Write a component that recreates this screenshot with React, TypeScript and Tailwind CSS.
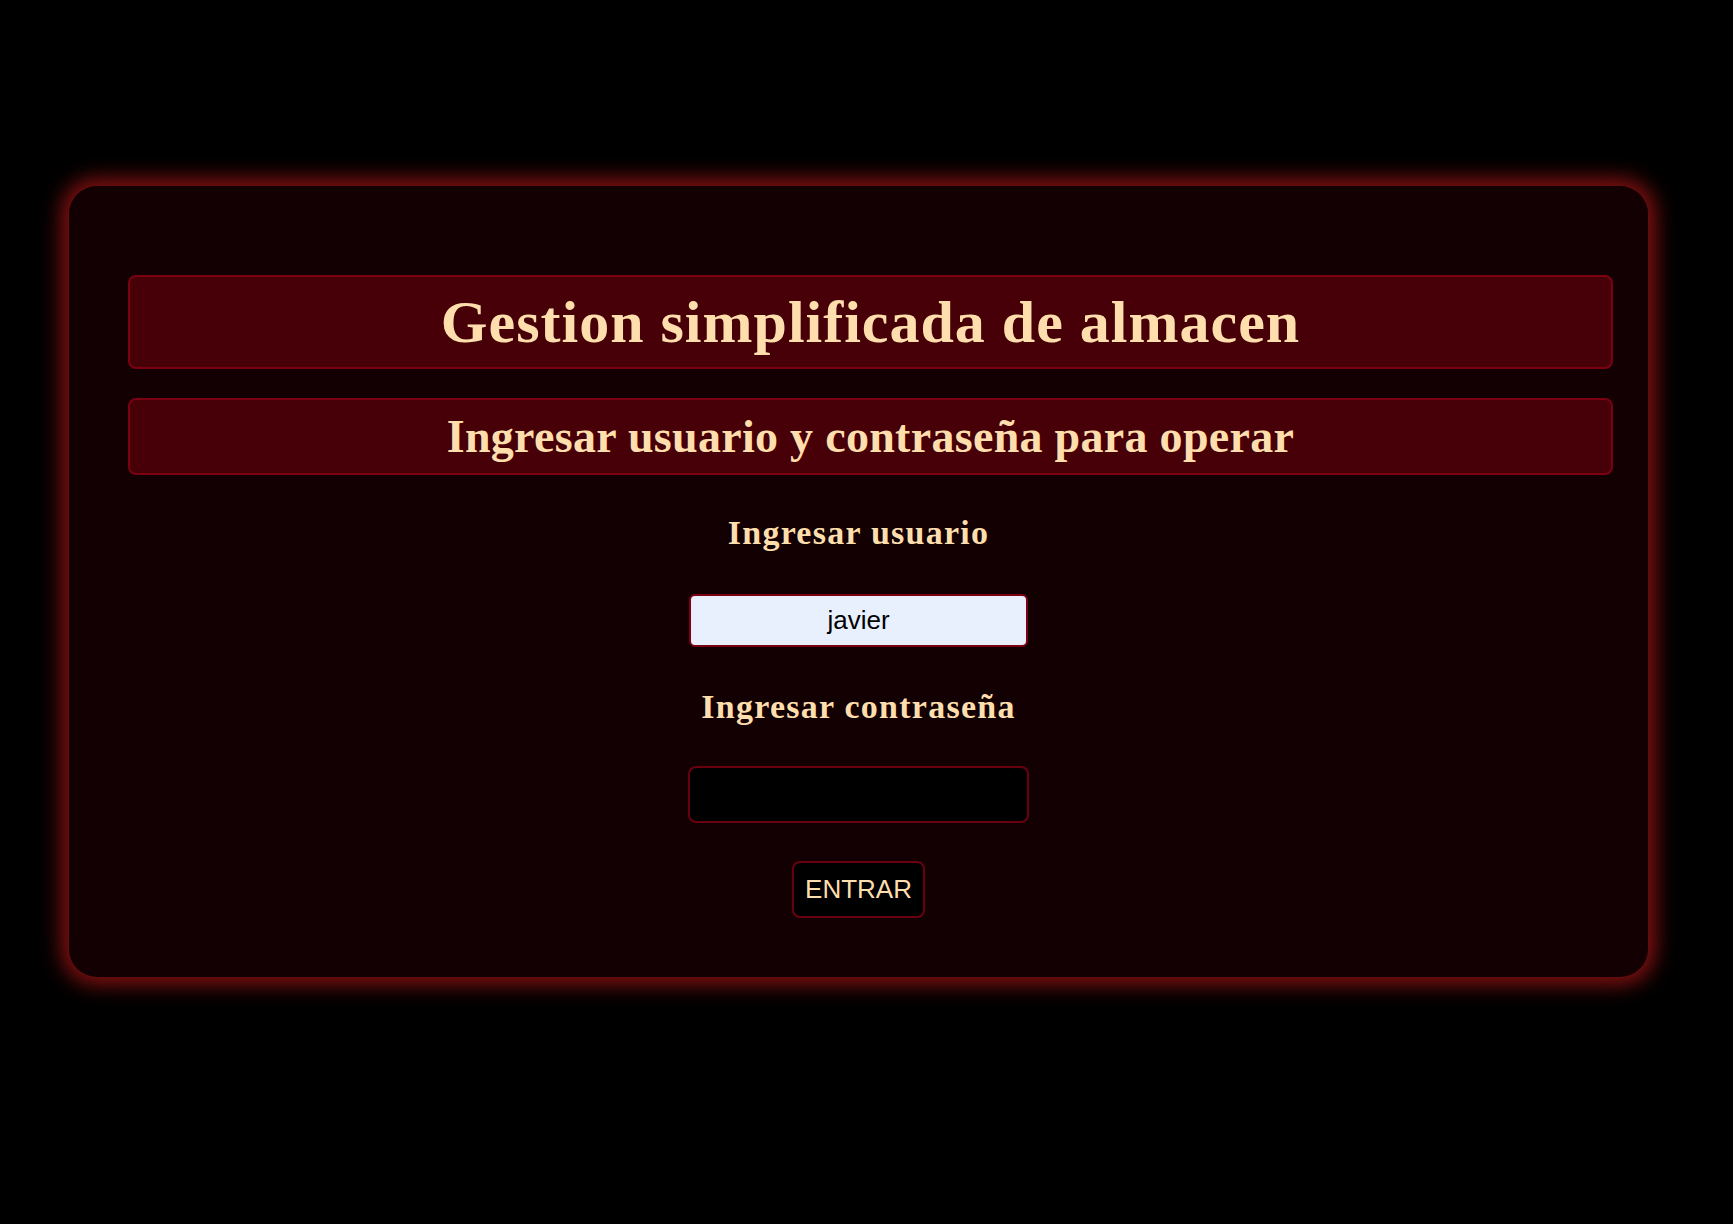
import React, { useState } from 'react';

const serif = "font-['Liberation_Serif','Times_New_Roman',serif] font-bold";
const sans = "font-['Liberation_Sans',Arial,sans-serif]";

export default function App() {
  const [usuario, setUsuario] = useState('javier');
  const [clave, setClave] = useState('');

  return (
    <div className="min-h-screen w-full bg-black pt-[186px] pb-[200px]">
      <div className="ml-[69px] w-[1579px] rounded-[28px] bg-[#120002] pt-[89px] pb-[59px] shadow-[0_0_20px_8px_rgba(160,20,20,0.8)]">
        {/* Encabezados */}
        <div className="pl-[59px] pr-[35px]">
          <div className="flex h-[94px] items-center justify-center rounded-[8px] border-2 border-[#7a0012] bg-[#470007]">
            <h1 className={`${serif} text-[60px] leading-none tracking-[1px] text-[#ffdead]`}>Gestion simplificada de almacen</h1>
          </div>
          <div className="mt-[29px] flex h-[77px] items-center justify-center rounded-[8px] border-2 border-[#7a0012] bg-[#470007]">
            <h2 className={`${serif} text-[46px] leading-none tracking-[0.3px] text-[#ffdead]`}>Ingresar usuario y contraseña para operar</h2>
          </div>
        </div>

        {/* Formulario */}
        <form className="flex flex-col items-center" onSubmit={(e) => e.preventDefault()}>
          <label htmlFor="usuario" className={`${serif} mt-[38px] text-[34px] leading-[40px] tracking-[1.25px] text-[#ffdead]`}>
            Ingresar usuario
          </label>
          <input
            id="usuario"
            value={usuario}
            onChange={(e) => setUsuario(e.target.value)}
            className={`${sans} mt-[41px] h-[53px] w-[339px] rounded-[6px] border-2 border-[#7a0012] bg-[#e8f0fe] text-center text-[26px] text-black outline-none`}
          />
          <label htmlFor="clave" className={`${serif} mt-[40px] text-[34px] leading-[40px] tracking-[1.25px] text-[#ffdead]`}>
            Ingresar contraseña
          </label>
          <input
            id="clave"
            type="password"
            value={clave}
            onChange={(e) => setClave(e.target.value)}
            className={`${sans} mt-[39px] h-[57px] w-[341px] rounded-[8px] border-2 border-[#6a000f] bg-black text-center text-[26px] text-[#ffdead] outline-none`}
          />
          <button
            type="submit"
            className={`${sans} mt-[38px] h-[57px] w-[133px] rounded-[8px] border-2 border-[#6a000f] bg-black text-[26px] text-[#ffdead]`}
          >
            ENTRAR
          </button>
        </form>
      </div>
    </div>
  );
}
